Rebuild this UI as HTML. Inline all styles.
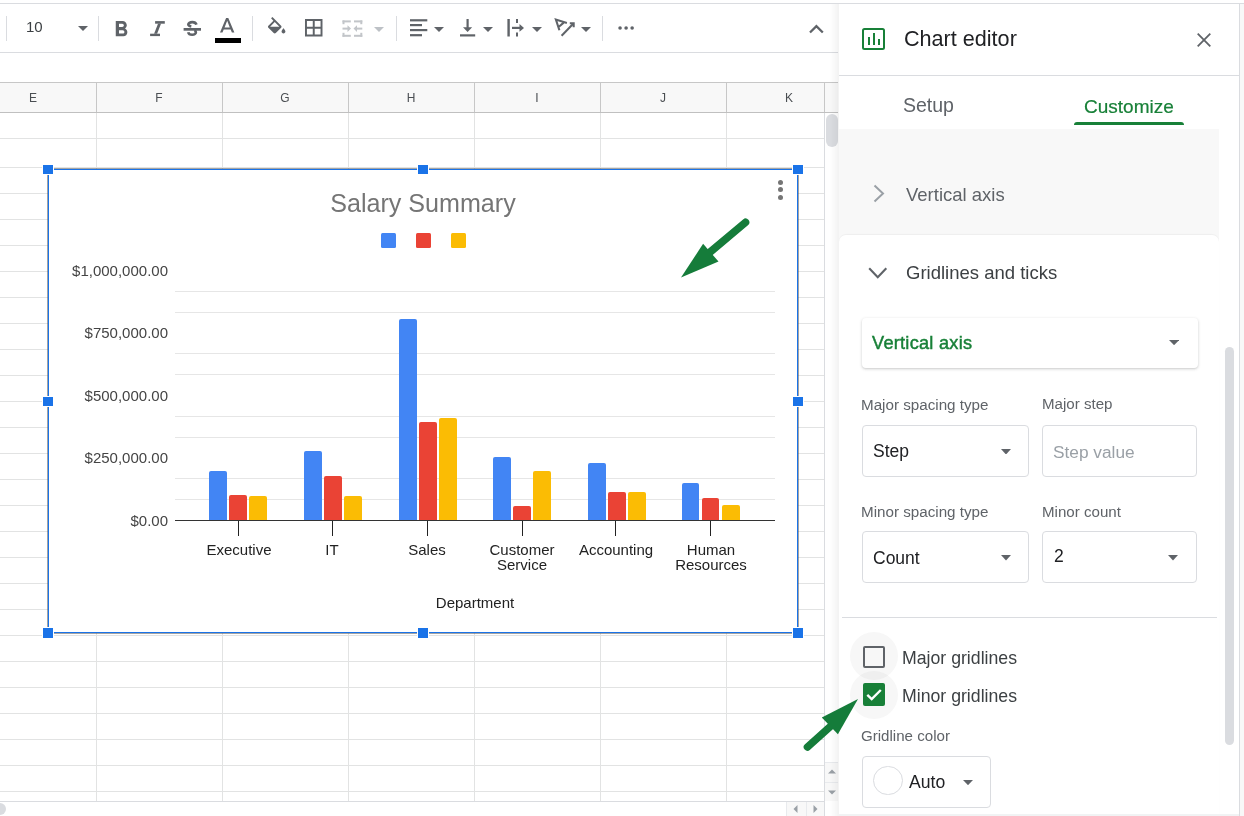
<!DOCTYPE html><html><head><meta charset="utf-8"><style>
html,body{margin:0;padding:0;width:1244px;height:816px;overflow:hidden;background:#fff;position:relative;font-family:"Liberation Sans",sans-serif}
.t{position:absolute;white-space:nowrap;will-change:transform}
.r{position:absolute}
</style></head><body>
<div class="r" style="left:0px;top:83px;width:838px;height:29px;background:#f8f8f8;"></div>
<div class="r" style="left:0px;top:82px;width:838px;height:1px;background:#c7c7c7;"></div>
<div class="r" style="left:0px;top:112px;width:838px;height:1px;background:#c0c0c0;"></div>
<div class="r" style="left:0px;top:113px;width:825px;height:0px;background:#c0c0c0;"></div>
<div class="r" style="left:96px;top:83px;width:1px;height:29px;background:#c7c7c7;"></div>
<div class="r" style="left:222px;top:83px;width:1px;height:29px;background:#c7c7c7;"></div>
<div class="r" style="left:348px;top:83px;width:1px;height:29px;background:#c7c7c7;"></div>
<div class="r" style="left:474px;top:83px;width:1px;height:29px;background:#c7c7c7;"></div>
<div class="r" style="left:600px;top:83px;width:1px;height:29px;background:#c7c7c7;"></div>
<div class="r" style="left:726px;top:83px;width:1px;height:29px;background:#c7c7c7;"></div>
<div class="r" style="left:824px;top:83px;width:1px;height:29px;background:#c7c7c7;"></div>
<div class="r" style="left:824px;top:113px;width:1px;height:703px;background:#dadce0;"></div>
<div class="t" style="left:-267.00px;width:600px;text-align:center;top:91.64px;font-size:12px;line-height:12px;color:#4a4e52;font-weight:400;">E</div>
<div class="t" style="left:-141.00px;width:600px;text-align:center;top:91.64px;font-size:12px;line-height:12px;color:#4a4e52;font-weight:400;">F</div>
<div class="t" style="left:-15.00px;width:600px;text-align:center;top:91.64px;font-size:12px;line-height:12px;color:#4a4e52;font-weight:400;">G</div>
<div class="t" style="left:111.00px;width:600px;text-align:center;top:91.64px;font-size:12px;line-height:12px;color:#4a4e52;font-weight:400;">H</div>
<div class="t" style="left:237.00px;width:600px;text-align:center;top:91.64px;font-size:12px;line-height:12px;color:#4a4e52;font-weight:400;">I</div>
<div class="t" style="left:363.00px;width:600px;text-align:center;top:91.64px;font-size:12px;line-height:12px;color:#4a4e52;font-weight:400;">J</div>
<div class="t" style="left:489.00px;width:600px;text-align:center;top:91.64px;font-size:12px;line-height:12px;color:#4a4e52;font-weight:400;">K</div>
<div class="r" style="left:0px;top:138px;width:824px;height:1px;background:#e2e3e3;"></div>
<div class="r" style="left:0px;top:167px;width:824px;height:1px;background:#e2e3e3;"></div>
<div class="r" style="left:0px;top:193px;width:824px;height:1px;background:#e2e3e3;"></div>
<div class="r" style="left:0px;top:219px;width:824px;height:1px;background:#e2e3e3;"></div>
<div class="r" style="left:0px;top:245px;width:824px;height:1px;background:#e2e3e3;"></div>
<div class="r" style="left:0px;top:271px;width:824px;height:1px;background:#e2e3e3;"></div>
<div class="r" style="left:0px;top:297px;width:824px;height:1px;background:#e2e3e3;"></div>
<div class="r" style="left:0px;top:323px;width:824px;height:1px;background:#e2e3e3;"></div>
<div class="r" style="left:0px;top:349px;width:824px;height:1px;background:#e2e3e3;"></div>
<div class="r" style="left:0px;top:375px;width:824px;height:1px;background:#e2e3e3;"></div>
<div class="r" style="left:0px;top:401px;width:824px;height:1px;background:#e2e3e3;"></div>
<div class="r" style="left:0px;top:427px;width:824px;height:1px;background:#e2e3e3;"></div>
<div class="r" style="left:0px;top:453px;width:824px;height:1px;background:#e2e3e3;"></div>
<div class="r" style="left:0px;top:479px;width:824px;height:1px;background:#e2e3e3;"></div>
<div class="r" style="left:0px;top:505px;width:824px;height:1px;background:#e2e3e3;"></div>
<div class="r" style="left:0px;top:531px;width:824px;height:1px;background:#e2e3e3;"></div>
<div class="r" style="left:0px;top:557px;width:824px;height:1px;background:#e2e3e3;"></div>
<div class="r" style="left:0px;top:583px;width:824px;height:1px;background:#e2e3e3;"></div>
<div class="r" style="left:0px;top:609px;width:824px;height:1px;background:#e2e3e3;"></div>
<div class="r" style="left:0px;top:635px;width:824px;height:1px;background:#e2e3e3;"></div>
<div class="r" style="left:0px;top:661px;width:824px;height:1px;background:#e2e3e3;"></div>
<div class="r" style="left:0px;top:687px;width:824px;height:1px;background:#e2e3e3;"></div>
<div class="r" style="left:0px;top:713px;width:824px;height:1px;background:#e2e3e3;"></div>
<div class="r" style="left:0px;top:739px;width:824px;height:1px;background:#e2e3e3;"></div>
<div class="r" style="left:0px;top:765px;width:824px;height:1px;background:#e2e3e3;"></div>
<div class="r" style="left:0px;top:791px;width:824px;height:1px;background:#e2e3e3;"></div>
<div class="r" style="left:96px;top:113px;width:1px;height:688px;background:#e2e3e3;"></div>
<div class="r" style="left:222px;top:113px;width:1px;height:688px;background:#e2e3e3;"></div>
<div class="r" style="left:348px;top:113px;width:1px;height:688px;background:#e2e3e3;"></div>
<div class="r" style="left:474px;top:113px;width:1px;height:688px;background:#e2e3e3;"></div>
<div class="r" style="left:600px;top:113px;width:1px;height:688px;background:#e2e3e3;"></div>
<div class="r" style="left:726px;top:113px;width:1px;height:688px;background:#e2e3e3;"></div>
<div class="r" style="left:0px;top:801px;width:825px;height:1px;background:#dadce0;"></div>
<div class="r" style="left:825px;top:113px;width:13px;height:688px;background:#ffffff;"></div>
<div class="r" style="left:826px;top:114px;width:12px;height:33px;border-radius:6px;background:#dadce0"></div>
<div class="r" style="left:825px;top:762px;width:13px;height:1px;background:#e8eaed;"></div>
<div class="r" style="left:825px;top:782px;width:13px;height:1px;background:#e8eaed;"></div>
<div class="r" style="left:825px;top:763px;width:13px;height:19px;background:#f8f8f8;"></div>
<div class="r" style="left:825px;top:783px;width:13px;height:18px;background:#f8f8f8;"></div>
<svg class="r" style="left:827px;top:768px" width="10" height="6"><path d="M1 5.5L5 1.5L9 5.5Z" fill="#9aa0a6"/></svg>
<svg class="r" style="left:827px;top:790px" width="10" height="6"><path d="M1 0.5L5 4.5L9 0.5Z" fill="#9aa0a6"/></svg>
<div class="r" style="left:-10px;top:803px;width:16px;height:12px;border-radius:6px;background:#dadce0"></div>
<div class="r" style="left:786px;top:802px;width:1px;height:14px;background:#e8eaed;"></div>
<div class="r" style="left:806px;top:802px;width:1px;height:14px;background:#e8eaed;"></div>
<div class="r" style="left:787px;top:802px;width:19px;height:14px;background:#f8f8f8;"></div>
<div class="r" style="left:807px;top:802px;width:17px;height:14px;background:#f8f8f8;"></div>
<svg class="r" style="left:792px;top:804px" width="6" height="10"><path d="M5.5 1L1.5 5L5.5 9Z" fill="#9aa0a6"/></svg>
<svg class="r" style="left:813px;top:804px" width="6" height="10"><path d="M0.5 1L4.5 5L0.5 9Z" fill="#9aa0a6"/></svg>
<div class="r" style="left:0px;top:3px;width:1244px;height:1px;background:#dadce0;"></div>
<div class="r" style="left:0px;top:52px;width:838px;height:1px;background:#dadce0;"></div>
<div class="r" style="left:6px;top:16px;width:1px;height:25px;background:#dadce0;"></div>
<div class="r" style="left:98px;top:16px;width:1px;height:25px;background:#dadce0;"></div>
<div class="r" style="left:252px;top:16px;width:1px;height:25px;background:#dadce0;"></div>
<div class="r" style="left:396px;top:16px;width:1px;height:25px;background:#dadce0;"></div>
<div class="r" style="left:602px;top:16px;width:1px;height:25px;background:#dadce0;"></div>
<div class="t" style="left:26.00px;top:19.40px;font-size:15px;line-height:15px;color:#3c4043;font-weight:400;">10</div>
<svg class="r" style="left:78px;top:26.2px" width="10" height="5" viewBox="0 0 10 5"><path d="M0 0H10L5.0 5Z" fill="#5f6368"/></svg>
<svg class="r" style="left:374px;top:26.5px" width="10" height="5" viewBox="0 0 10 5"><path d="M0 0H10L5.0 5Z" fill="#bdc1c6"/></svg>
<svg class="r" style="left:434px;top:27px" width="10" height="5" viewBox="0 0 10 5"><path d="M0 0H10L5.0 5Z" fill="#5f6368"/></svg>
<svg class="r" style="left:483px;top:27px" width="10" height="5" viewBox="0 0 10 5"><path d="M0 0H10L5.0 5Z" fill="#5f6368"/></svg>
<svg class="r" style="left:532px;top:27px" width="10" height="5" viewBox="0 0 10 5"><path d="M0 0H10L5.0 5Z" fill="#5f6368"/></svg>
<svg class="r" style="left:581px;top:27px" width="10" height="5" viewBox="0 0 10 5"><path d="M0 0H10L5.0 5Z" fill="#5f6368"/></svg>
<svg class="r" style="left:116.3px;top:20.9px;overflow:visible" width="11.6" height="15.6" viewBox="0 0 11.6 15.6"><path transform="translate(-7.8 -4.45) scale(1.08 1.1)" d="M15.6 10.79c.97-.67 1.65-1.77 1.65-2.79 0-2.26-1.75-4-4-4H7v14h7.04c2.09 0 3.71-1.7 3.71-3.79 0-1.52-.86-2.82-2.15-3.42zM10 6.5h3c.83 0 1.5.67 1.5 1.5s-.67 1.5-1.5 1.5h-3v-3zm3.5 9H10v-3h3.5c.83 0 1.5.67 1.5 1.5s-.67 1.5-1.5 1.5z" fill="#5f6368"/></svg>
<svg class="r" style="left:150px;top:20px;overflow:visible" width="16" height="17" viewBox="0 0 16 17"><g fill="#5f6368"><rect x="5.1" y="1.1" width="9.7" height="2.6"/><rect x="0.1" y="13.7" width="9.9" height="2.4"/><path d="M8.1 3.6H11.1L7.1 13.8H4.1Z"/></g></svg>
<svg class="r" style="left:183px;top:20px;overflow:visible" width="19" height="17" viewBox="0 0 19 17"><g fill="none" stroke="#5f6368" stroke-width="2.6"><path d="M13.5 4.6C12.9 2.9 11.3 2.1 9.3 2.1C6.9 2.1 5.3 3.2 5.3 4.6C5.3 5.6 6.4 6.1 8.3 6.4"/><path d="M5.2 12.2C5.6 13.9 7.1 14.7 9.2 14.7C11.5 14.7 12.9 13.6 12.9 12.2C12.9 11.2 12.3 10.6 11.3 10.3"/></g><rect x="0.6" y="8" width="17.4" height="2.7" fill="#5f6368"/></svg>
<svg class="r" style="left:220px;top:18px;overflow:visible" width="14.4" height="14.6" viewBox="0 0 14.4 14.6"><path transform="translate(-6.1 -3.13) scale(1.108 1.043)" d="M11 3L5.5 17h2.25l1.12-3h6.25l1.12 3h2.25L13 3h-2zm-1.38 9L12 5.67 14.38 12H9.62z" fill="#5f6368"/></svg>
<div class="r" style="left:215px;top:38px;width:26px;height:5px;background:#000;"></div>
<svg class="r" style="left:268px;top:17px;overflow:visible" width="17.5" height="16.5" viewBox="0 0 17.5 16.5"><path transform="translate(-2.95 0) scale(0.97 0.97)" d="M16.56 8.94L7.62 0 6.21 1.41l2.38 2.38-5.15 5.15c-.59.59-.59 1.54 0 2.12l5.5 5.5c.29.29.68.44 1.06.44s.77-.15 1.06-.44l5.5-5.5c.59-.58.59-1.53 0-2.12zM5.21 10L10 5.21 14.79 10H5.21zM19 11.5s-2 2.17-2 3.5c0 1.1.9 2 2 2s2-.9 2-2c0-1.33-2-3.5-2-3.5z" fill="#5f6368"/></svg>
<svg class="r" style="left:305.3px;top:19px;overflow:visible" width="17.5" height="17.5" viewBox="0 0 17.5 17.5"><path transform="translate(-2.92 -2.92) scale(0.972)" d="M3 3v18h18V3H3zm8 16H5v-6h6v6zm0-8H5V5h6v6zm8 8h-6v-6h6v6zm0-8h-6V5h6v6z" fill="#5f6368"/></svg>
<svg class="r" style="left:342px;top:20px;overflow:visible" width="21" height="17" viewBox="0 0 21 17"><g fill="#c2c5c9">
<rect x="0.5" y="0.4" width="8.3" height="2"/><rect x="0.5" y="0.4" width="2" height="3.8"/>
<rect x="0.5" y="14.8" width="8.3" height="2"/><rect x="0.5" y="12.8" width="2" height="4"/>
<rect x="12" y="0.4" width="8.3" height="2"/><rect x="18.3" y="0.4" width="2" height="3.8"/>
<rect x="12" y="14.8" width="8.3" height="2"/><rect x="18.3" y="12.8" width="2" height="4"/>
<rect x="0.5" y="7.6" width="5.5" height="2"/><path d="M5.5 5.2L9 8.6L5.5 12Z"/>
<rect x="14.5" y="7.6" width="5.8" height="2"/><path d="M15 5.2L11.5 8.6L15 12Z"/>
</g></svg>
<svg class="r" style="left:410px;top:19px;overflow:visible" width="17.3" height="17.5" viewBox="0 0 17.3 17.5"><g fill="#5f6368"><rect x="0" y="0.2" width="17.3" height="2.2"/><rect x="0" y="5" width="12" height="2.2"/><rect x="0" y="10" width="17.3" height="2.2"/><rect x="0" y="15.1" width="12" height="2.2"/></g></svg>
<svg class="r" style="left:459.8px;top:19px;overflow:visible" width="15.2" height="17.5" viewBox="0 0 15.2 17.5"><g fill="#5f6368"><rect x="0" y="15.3" width="15.2" height="2.2"/><rect x="6.5" y="0" width="2.2" height="10"/><path d="M3 8.3H12.2L7.6 13Z"/></g></svg>
<svg class="r" style="left:507px;top:19px;overflow:visible" width="17.5" height="17.5" viewBox="0 0 17.5 17.5"><g fill="#5f6368"><rect x="0.4" y="0" width="2.4" height="17.5"/><rect x="9" y="0" width="2" height="4"/><rect x="9" y="13.5" width="2" height="4"/><rect x="5" y="7.8" width="9" height="2.2"/><path d="M12.5 5L17 8.9L12.5 12.8Z"/></g></svg>
<svg class="r" style="left:550px;top:14px;overflow:visible" width="26" height="26" viewBox="0 0 26 26"><g fill="none" stroke="#5f6368" stroke-width="2.05" stroke-linejoin="miter"><path d="M9.4 16.2L5.9 5.6L16.9 9.1"/><path d="M8.9 12.7L13.7 8.6"/><path d="M11.6 21.7L23.2 9.8"/><path d="M19.8 9.3H23.7V13.2"/></g></svg>
<svg class="r" style="left:617.5px;top:26px;overflow:visible" width="17" height="4" viewBox="0 0 17 4"><g fill="#5f6368"><circle cx="2.05" cy="2" r="1.8"/><circle cx="8.1" cy="2" r="1.8"/><circle cx="14.15" cy="2" r="1.8"/></g></svg>
<svg class="r" style="left:809px;top:23.5px;overflow:visible" width="15" height="10" viewBox="0 0 15 10"><path d="M1 8.5L7.4 2.2L13.8 8.5" fill="none" stroke="#5f6368" stroke-width="2.3"/></svg>
<div class="r" style="left:49px;top:171px;width:748px;height:461px;background:#fff;"></div>
<div class="r" style="left:47px;top:168px;width:752px;height:466px;background:rgba(90,90,90,0.55);"></div>
<div class="r" style="left:48px;top:169px;width:750px;height:464px;background:#1a73e8;"></div>
<div class="r" style="left:49px;top:170px;width:748px;height:462px;background:#fff;"></div>
<div class="r" style="left:42px;top:163.75px;width:10px;height:9.5px;border:1px solid #fff;background:#1a73e8"></div>
<div class="r" style="left:417px;top:163.75px;width:10px;height:9.5px;border:1px solid #fff;background:#1a73e8"></div>
<div class="r" style="left:792px;top:163.75px;width:10px;height:9.5px;border:1px solid #fff;background:#1a73e8"></div>
<div class="r" style="left:42px;top:395.65px;width:10px;height:9.5px;border:1px solid #fff;background:#1a73e8"></div>
<div class="r" style="left:792px;top:395.65px;width:10px;height:9.5px;border:1px solid #fff;background:#1a73e8"></div>
<div class="r" style="left:42px;top:627.25px;width:10px;height:9.5px;border:1px solid #fff;background:#1a73e8"></div>
<div class="r" style="left:417px;top:627.25px;width:10px;height:9.5px;border:1px solid #fff;background:#1a73e8"></div>
<div class="r" style="left:792px;top:627.25px;width:10px;height:9.5px;border:1px solid #fff;background:#1a73e8"></div>
<div class="t" style="left:123.20px;width:600px;text-align:center;top:190.75px;font-size:25.1px;line-height:25.1px;color:#757575;font-weight:400;">Salary Summary</div>
<div class="r" style="left:380.6px;top:232.6px;width:15px;height:15px;border-radius:1.5px;background:#4285f4"></div>
<div class="r" style="left:415.6px;top:232.6px;width:15px;height:15px;border-radius:1.5px;background:#ea4335"></div>
<div class="r" style="left:450.5px;top:232.6px;width:15px;height:15px;border-radius:1.5px;background:#fbbc04"></div>
<div class="r" style="left:778px;top:179.5px;width:5px;height:5px;border-radius:50%;background:#757575"></div>
<div class="r" style="left:778px;top:187.0px;width:5px;height:5px;border-radius:50%;background:#757575"></div>
<div class="r" style="left:778px;top:194.5px;width:5px;height:5px;border-radius:50%;background:#757575"></div>
<div class="t" style="left:-432.50px;width:600px;text-align:right;top:262.50px;font-size:15px;line-height:15px;color:#444444;font-weight:400;">$1,000,000.00</div>
<div class="t" style="left:-432.50px;width:600px;text-align:right;top:325.00px;font-size:15px;line-height:15px;color:#444444;font-weight:400;">$750,000.00</div>
<div class="t" style="left:-432.50px;width:600px;text-align:right;top:387.50px;font-size:15px;line-height:15px;color:#444444;font-weight:400;">$500,000.00</div>
<div class="t" style="left:-432.50px;width:600px;text-align:right;top:450.00px;font-size:15px;line-height:15px;color:#444444;font-weight:400;">$250,000.00</div>
<div class="t" style="left:-432.50px;width:600px;text-align:right;top:512.50px;font-size:15px;line-height:15px;color:#444444;font-weight:400;">$0.00</div>
<div class="r" style="left:175px;top:291px;width:600px;height:1px;background:#e6e6e6;"></div>
<div class="r" style="left:175px;top:312px;width:600px;height:1px;background:#e6e6e6;"></div>
<div class="r" style="left:175px;top:353px;width:600px;height:1px;background:#e6e6e6;"></div>
<div class="r" style="left:175px;top:374px;width:600px;height:1px;background:#e6e6e6;"></div>
<div class="r" style="left:175px;top:416px;width:600px;height:1px;background:#e6e6e6;"></div>
<div class="r" style="left:175px;top:437px;width:600px;height:1px;background:#e6e6e6;"></div>
<div class="r" style="left:175px;top:478px;width:600px;height:1px;background:#e6e6e6;"></div>
<div class="r" style="left:175px;top:499px;width:600px;height:1px;background:#e6e6e6;"></div>
<div class="r" style="left:209.0px;top:470.8px;width:17.9px;height:49.2px;border-radius:2px 2px 0 0;background:#4285f4"></div>
<div class="r" style="left:228.9px;top:495px;width:17.9px;height:25.0px;border-radius:2px 2px 0 0;background:#ea4335"></div>
<div class="r" style="left:249.0px;top:495.8px;width:17.9px;height:24.2px;border-radius:2px 2px 0 0;background:#fbbc04"></div>
<div class="r" style="left:304.0px;top:450.5px;width:17.9px;height:69.5px;border-radius:2px 2px 0 0;background:#4285f4"></div>
<div class="r" style="left:323.9px;top:476px;width:17.9px;height:44.0px;border-radius:2px 2px 0 0;background:#ea4335"></div>
<div class="r" style="left:344.0px;top:495.8px;width:17.9px;height:24.2px;border-radius:2px 2px 0 0;background:#fbbc04"></div>
<div class="r" style="left:399.0px;top:319px;width:17.9px;height:201.0px;border-radius:2px 2px 0 0;background:#4285f4"></div>
<div class="r" style="left:418.9px;top:422px;width:17.9px;height:98.0px;border-radius:2px 2px 0 0;background:#ea4335"></div>
<div class="r" style="left:439.0px;top:417.7px;width:17.9px;height:102.3px;border-radius:2px 2px 0 0;background:#fbbc04"></div>
<div class="r" style="left:493.0px;top:457px;width:17.6px;height:63.0px;border-radius:2px 2px 0 0;background:#4285f4"></div>
<div class="r" style="left:513.0px;top:506px;width:17.6px;height:14.0px;border-radius:2px 2px 0 0;background:#ea4335"></div>
<div class="r" style="left:533.1px;top:470.5px;width:17.6px;height:49.5px;border-radius:2px 2px 0 0;background:#fbbc04"></div>
<div class="r" style="left:588.0px;top:463.3px;width:17.6px;height:56.7px;border-radius:2px 2px 0 0;background:#4285f4"></div>
<div class="r" style="left:608.1px;top:492.2px;width:17.6px;height:27.8px;border-radius:2px 2px 0 0;background:#ea4335"></div>
<div class="r" style="left:628.1px;top:492.2px;width:17.6px;height:27.8px;border-radius:2px 2px 0 0;background:#fbbc04"></div>
<div class="r" style="left:681.8px;top:483.3px;width:17.5px;height:36.7px;border-radius:2px 2px 0 0;background:#4285f4"></div>
<div class="r" style="left:701.9px;top:498.4px;width:17.5px;height:21.6px;border-radius:2px 2px 0 0;background:#ea4335"></div>
<div class="r" style="left:722.0px;top:505px;width:17.5px;height:15.0px;border-radius:2px 2px 0 0;background:#fbbc04"></div>
<div class="r" style="left:175px;top:519.6px;width:600px;height:1.4px;background:#333333;"></div>
<div class="r" style="left:238px;top:521px;width:1.3px;height:14.5px;background:#222222;"></div>
<div class="r" style="left:332px;top:521px;width:1.3px;height:14.5px;background:#222222;"></div>
<div class="r" style="left:427px;top:521px;width:1.3px;height:14.5px;background:#222222;"></div>
<div class="r" style="left:522px;top:521px;width:1.3px;height:14.5px;background:#222222;"></div>
<div class="r" style="left:615px;top:521px;width:1.3px;height:14.5px;background:#222222;"></div>
<div class="r" style="left:710px;top:521px;width:1.3px;height:14.5px;background:#222222;"></div>
<div class="t" style="left:-61.40px;width:600px;text-align:center;top:542.10px;font-size:15px;line-height:15px;color:#222222;font-weight:400;">Executive</div>
<div class="t" style="left:32.30px;width:600px;text-align:center;top:542.10px;font-size:15px;line-height:15px;color:#222222;font-weight:400;">IT</div>
<div class="t" style="left:127.30px;width:600px;text-align:center;top:542.10px;font-size:15px;line-height:15px;color:#222222;font-weight:400;">Sales</div>
<div class="t" style="left:222.30px;width:600px;text-align:center;top:542.10px;font-size:15px;line-height:15px;color:#222222;font-weight:400;">Customer</div>
<div class="t" style="left:222.30px;width:600px;text-align:center;top:557.10px;font-size:15px;line-height:15px;color:#222222;font-weight:400;">Service</div>
<div class="t" style="left:316.10px;width:600px;text-align:center;top:542.10px;font-size:15px;line-height:15px;color:#222222;font-weight:400;">Accounting</div>
<div class="t" style="left:411.10px;width:600px;text-align:center;top:542.10px;font-size:15px;line-height:15px;color:#222222;font-weight:400;">Human</div>
<div class="t" style="left:411.10px;width:600px;text-align:center;top:557.10px;font-size:15px;line-height:15px;color:#222222;font-weight:400;">Resources</div>
<div class="t" style="left:175.00px;width:600px;text-align:center;top:594.90px;font-size:15px;line-height:15px;color:#222222;font-weight:400;">Department</div>
<div class="r" style="left:830px;top:4px;width:9px;height:812px;background:linear-gradient(to right,rgba(0,0,0,0),rgba(0,0,0,0.05))"></div>
<div class="r" style="left:839px;top:4px;width:401px;height:812px;background:#ffffff;"></div>
<div class="r" style="left:1239px;top:4px;width:1px;height:812px;background:#dadce0;"></div>
<div class="r" style="left:1240px;top:4px;width:4px;height:812px;background:#f8f8f8;"></div>
<div class="r" style="left:839px;top:75px;width:400px;height:1px;background:#dadce0;"></div>
<div class="r" style="left:862.2px;top:27.5px;width:19.2px;height:18.2px;border:2.3px solid #188038;border-radius:2.5px"></div>
<div class="r" style="left:867.6px;top:36.8px;width:2.2px;height:8px;background:#188038;"></div>
<div class="r" style="left:872.8px;top:32.6px;width:2.2px;height:12.2px;background:#188038;"></div>
<div class="r" style="left:878px;top:39.4px;width:2.2px;height:5.4px;background:#188038;"></div>
<div class="t" style="left:904.00px;top:27.92px;font-size:21.6px;line-height:21.6px;color:#202124;font-weight:400;">Chart editor</div>
<svg class="r" style="left:1197.2px;top:33px;overflow:visible" width="14" height="14" viewBox="0 0 14 14"><path d="M0.7 0.7L13.3 13.3M13.3 0.7L0.7 13.3" stroke="#5f6368" stroke-width="1.8"/></svg>
<div class="t" style="left:903.30px;top:96.09px;font-size:19.5px;line-height:19.5px;color:#5f6368;font-weight:400;">Setup</div>
<div class="t" style="left:1083.80px;top:96.62px;font-size:19px;line-height:19px;color:#188038;font-weight:400;-webkit-text-stroke:0.2px #188038">Customize</div>
<div class="r" style="left:1074px;top:122px;width:110px;height:3px;border-radius:3px 3px 0 0;background:#188038"></div>
<div class="r" style="left:839px;top:129px;width:380px;height:687px;background:#f8f8f8;"></div>
<svg class="r" style="left:873px;top:184px;overflow:visible" width="12" height="19" viewBox="0 0 12 19"><path d="M1.5 1.5L10 9.5L1.5 17.5" fill="none" stroke="#9aa0a6" stroke-width="2"/></svg>
<div class="t" style="left:906.30px;top:186.34px;font-size:18.5px;line-height:18.5px;color:#5f6368;font-weight:400;">Vertical axis</div>
<div class="r" style="left:839px;top:235px;width:380px;height:600px;background:#fff;border-radius:7px 7px 0 0;box-shadow:0 -1px 1px rgba(0,0,0,0.04)"></div>
<svg class="r" style="left:868px;top:266.5px;overflow:visible" width="19.5" height="12" viewBox="0 0 19.5 12"><path d="M1.2 1.2L9.75 10.2L18.3 1.2" fill="none" stroke="#5f6368" stroke-width="2.1"/></svg>
<div class="t" style="left:906.30px;top:263.84px;font-size:18.5px;line-height:18.5px;color:#3c4043;font-weight:400;">Gridlines and ticks</div>
<div class="r" style="left:862px;top:318px;width:335.5px;height:50px;background:#fff;border-radius:4px;box-shadow:0 1px 2px rgba(60,64,67,0.18),0 1px 3px 1px rgba(60,64,67,0.08)"></div>
<div class="t" style="left:871.60px;top:334.09px;font-size:18.2px;line-height:18.2px;color:#188038;font-weight:400;-webkit-text-stroke:0.45px #188038;letter-spacing:0.25px">Vertical axis</div>
<svg class="r" style="left:1168.8px;top:339.8px" width="10.2" height="5.2" viewBox="0 0 10.2 5.2"><path d="M0 0H10.2L5.1 5.2Z" fill="#5f6368"/></svg>
<div class="t" style="left:861.30px;top:396.73px;font-size:15.2px;line-height:15.2px;color:#5f6368;font-weight:400;">Major spacing type</div>
<div class="t" style="left:1041.80px;top:396.42px;font-size:15.1px;line-height:15.1px;color:#5f6368;font-weight:400;">Major step</div>
<div class="r" style="left:862px;top:424.5px;width:165px;height:50.5px;border:1px solid #dadce0;border-radius:4px;background:#fff"></div>
<div class="r" style="left:1041.8px;top:424.5px;width:153.2px;height:50.5px;border:1px solid #dadce0;border-radius:4px;background:#fff"></div>
<div class="t" style="left:872.50px;top:443.39px;font-size:17.5px;line-height:17.5px;color:#202124;font-weight:400;">Step</div>
<svg class="r" style="left:1000.5px;top:448.5px" width="10" height="5.5" viewBox="0 0 10 5.5"><path d="M0 0H10L5.0 5.5Z" fill="#5f6368"/></svg>
<div class="t" style="left:1052.50px;top:443.56px;font-size:17.3px;line-height:17.3px;color:#9aa0a6;font-weight:400;">Step value</div>
<div class="t" style="left:861.30px;top:503.73px;font-size:15.2px;line-height:15.2px;color:#5f6368;font-weight:400;">Minor spacing type</div>
<div class="t" style="left:1041.80px;top:503.62px;font-size:15.1px;line-height:15.1px;color:#5f6368;font-weight:400;">Minor count</div>
<div class="r" style="left:862px;top:531px;width:165px;height:50px;border:1px solid #dadce0;border-radius:4px;background:#fff"></div>
<div class="r" style="left:1041.8px;top:531px;width:153.2px;height:50px;border:1px solid #dadce0;border-radius:4px;background:#fff"></div>
<div class="t" style="left:872.50px;top:549.79px;font-size:17.5px;line-height:17.5px;color:#202124;font-weight:400;">Count</div>
<svg class="r" style="left:1000.5px;top:555px" width="10" height="5.5" viewBox="0 0 10 5.5"><path d="M0 0H10L5.0 5.5Z" fill="#5f6368"/></svg>
<div class="t" style="left:1053.50px;top:548.09px;font-size:17.5px;line-height:17.5px;color:#202124;font-weight:400;">2</div>
<svg class="r" style="left:1168.3px;top:555px" width="10" height="5.5" viewBox="0 0 10 5.5"><path d="M0 0H10L5.0 5.5Z" fill="#5f6368"/></svg>
<div class="r" style="left:842px;top:617px;width:375px;height:1px;background:#dadce0;"></div>
<div class="r" style="left:849.8px;top:632.3px;width:48px;height:48px;border-radius:50%;background:rgba(60,64,67,0.045)"></div>
<div class="r" style="left:849.8px;top:670.9px;width:48px;height:48px;border-radius:50%;background:rgba(60,64,67,0.045)"></div>
<div class="r" style="left:863px;top:646px;width:17.8px;height:17.8px;border:2.2px solid #5f6368;border-radius:2px"></div>
<div class="r" style="left:863px;top:683px;width:22px;height:22.5px;background:#188038;border-radius:2px"></div>
<svg class="r" style="left:863px;top:683px;overflow:visible" width="22" height="22.5" viewBox="0 0 22 22.5"><path d="M4.3 11.8L8.7 16L17.8 7" fill="none" stroke="#fff" stroke-width="2.4"/></svg>
<div class="t" style="left:901.80px;top:650.02px;font-size:17.7px;line-height:17.7px;color:#3c4043;font-weight:400;">Major gridlines</div>
<div class="t" style="left:901.80px;top:687.62px;font-size:17.7px;line-height:17.7px;color:#3c4043;font-weight:400;">Minor gridlines</div>
<div class="t" style="left:861.30px;top:727.72px;font-size:15.1px;line-height:15.1px;color:#5f6368;font-weight:400;">Gridline color</div>
<div class="r" style="left:862.3px;top:756.2px;width:126.5px;height:49.6px;border:1px solid #dadce0;border-radius:4px;background:#fff"></div>
<div class="r" style="left:873.3px;top:765.8px;width:27.6px;height:27.6px;border:1px solid #dadce0;border-radius:50%"></div>
<div class="t" style="left:909.00px;top:773.50px;font-size:17.6px;line-height:17.6px;color:#202124;font-weight:400;">Auto</div>
<svg class="r" style="left:963px;top:779.5px" width="10" height="5.2" viewBox="0 0 10 5.2"><path d="M0 0H10L5.0 5.2Z" fill="#5f6368"/></svg>
<div class="r" style="left:839px;top:814px;width:400px;height:2px;background:#f1f3f4;"></div>
<div class="r" style="left:1224.5px;top:347px;width:9.5px;height:398px;border-radius:5px;background:#dadce0"></div>
<svg class="r" style="left:0;top:0" width="1244" height="816"><g fill="#157c3a"><line x1="745.5" y1="222.3" x2="709" y2="253" stroke="#157c3a" stroke-width="7.6" stroke-linecap="round"/><path d="M681 277.6L703.1 243.8L718.5 261.5Z"/><line x1="807.5" y1="747" x2="832" y2="725" stroke="#157c3a" stroke-width="7.6" stroke-linecap="round"/><path d="M858 699L821.8 717.6L837.9 734.2Z"/></g></svg>
</body></html>
